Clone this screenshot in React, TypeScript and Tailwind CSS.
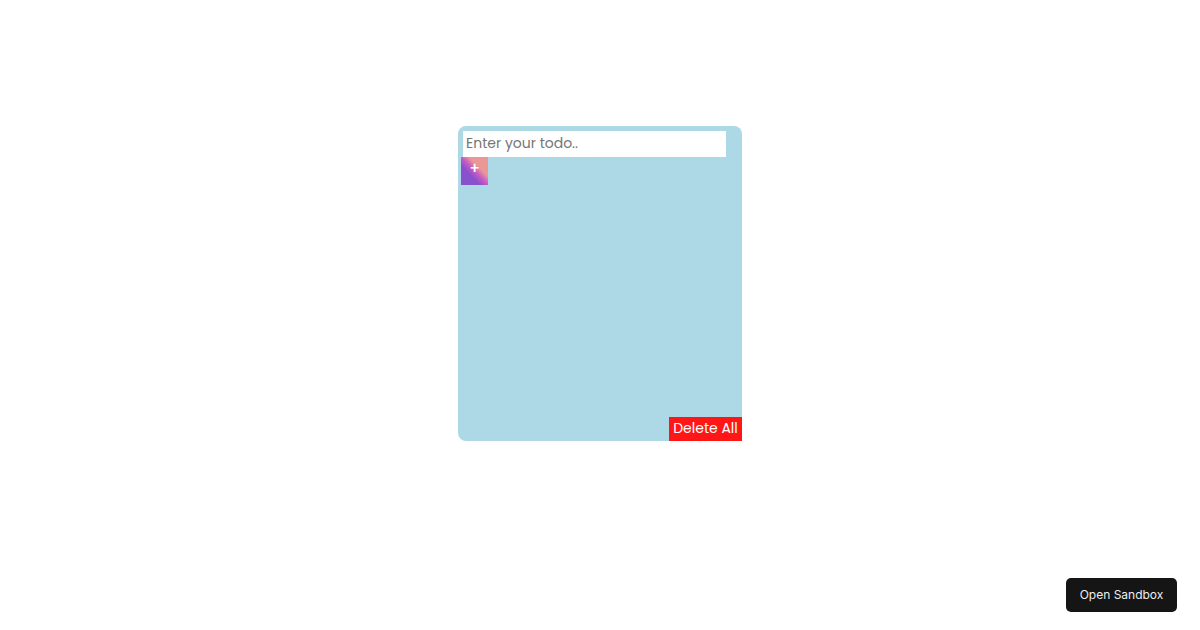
import React from "react";

export default function App() {
  return (
    <div className="relative w-[1200px] h-[630px] bg-white" style={{ fontFamily: "Poppins, 'Open Sans', 'Noto Sans', sans-serif" }}>
      <div className="flex justify-center pt-[126px]">
        <div className="flex flex-col w-[284px] h-[315px] rounded-[8px] bg-[#add8e6]">
          <input
            className="ml-[5px] mt-[5px] w-[263px] h-[26px] bg-white px-[3px] pb-[2px] text-[14px] text-[#555] placeholder:text-[#757575] outline-none"
            placeholder="Enter your todo.."
          />
          <button className="ml-[3px] w-[27px] h-[28px] flex items-start justify-center pt-[2px] text-white text-[15px] font-medium leading-[20px] bg-[linear-gradient(to_top_right,#8453cc_0%,#8a50cc_35%,#c65ac6_50%,#ea9797_65%,#ea9797_100%)]">
            +
          </button>
          <div className="mt-auto self-end">
            <button className="h-[24px] w-[73px] bg-[#ff1616] text-white text-[14px] leading-[24px] flex items-center justify-center pb-[2px]">
              Delete All
            </button>
          </div>
        </div>
      </div>
      <div className="absolute left-[1066px] top-[578px] w-[111px] h-[34px] rounded-[5px] bg-[#151515] flex items-center justify-center text-[12px] text-[#eeeeee]" style={{ fontFamily: "Inter, sans-serif" }}>
        Open Sandbox
      </div>
    </div>
  );
}
